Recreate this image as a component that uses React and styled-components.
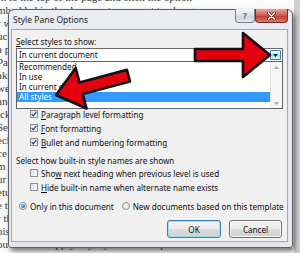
import React from 'react';
import styled, { createGlobalStyle } from 'styled-components';

const GlobalStyle = createGlobalStyle`
  html, body { margin: 0; padding: 0; }
  body { width: 300px; height: 253px; overflow: hidden; background: #ffffff; }
`;

const UI_FONT = `"Noto Sans", "Open Sans", sans-serif`;

// Backdrop: the Word document behind the dialog
const Screen = styled.div`
  position: relative;
  width: 300px;
  height: 253px;
  overflow: hidden;
  background: #cfcfcf;
`;

const Doc = styled.div`
  width: 294px;
  height: 262px;
  overflow: hidden;
  margin-top: -9px;
  padding-left: 0;
  background: #fbfbfb;
  font-family: "Liberation Serif", serif;
  font-size: 11px;
  line-height: 13px;
  color: #3a3a3a;
`;

const DocLine = styled.div`
  white-space: nowrap;
  margin-left: -3px;
`;

// Dialog window
const Dialog = styled.div`
  position: absolute;
  left: 8px;
  top: 9px;
  width: 285px;
  height: 239px;
  box-sizing: border-box;
  display: flex;
  flex-direction: column;
  background: linear-gradient(#e9edf1, #e3e7eb);
  border: 1px solid #5e6266;
  border-radius: 6px 6px 3px 3px;
  box-shadow: 2px 3px 5px rgba(0, 0, 0, 0.55);
  padding: 0 4px 5px 2px;
`;

const TitleBar = styled.div`
  height: 19px;
  display: flex;
  align-items: flex-start;
`;

const Title = styled.div`
  flex: 1;
  padding: 4px 0 0 2px;
  font-family: ${UI_FONT};
  font-size: 8.5px;
  line-height: 11px;
  color: #1e1e1e;
`;

const CaptionButton = styled.div`
  height: 14px;
  width: ${(p) => p.w}px;
  box-sizing: border-box;
  margin-top: -1px;
  display: flex;
  align-items: center;
  justify-content: center;
  border: 1px solid ${(p) => (p.close ? '#7a2a22' : '#7c8188')};
  border-top: none;
  border-radius: 0 0 4px 4px;
  background: ${(p) =>
    p.close
      ? 'linear-gradient(#e8a89e, #d0584a 50%, #c0392b 51%, #d87a68)'
      : 'linear-gradient(#f4f6f8, #dde2e7 50%, #cdd3da 51%, #e3e7eb)'};
  font-family: ${UI_FONT};
  font-size: 9px;
  font-weight: bold;
  color: ${(p) => (p.close ? '#fff' : '#6a6f75')};
`;

const Client = styled.div`
  flex: 1;
  position: relative;
  display: flex;
  flex-direction: column;
  background: #f0f0f0;
  border: 1px solid #a5a9ad;
  padding: 6px 4px 0 4px;
  font-family: ${UI_FONT};
  font-size: 8.1px;
  color: #111;
`;

const Label = styled.div`
  height: 11px;
  line-height: 11px;
  margin-top: ${(p) => p.mt || 0}px;
  white-space: nowrap;
`;

const Key = styled.span`
  text-decoration: underline;
  text-underline-offset: 1px;
`;

const Combo = styled.div`
  position: relative;
  height: 14px;
  margin-top: 1px;
  box-sizing: border-box;
  display: flex;
  align-items: center;
  background: #fff;
  border: 1px solid ${(p) => (p.active ? '#6a6a6a' : '#abadb3')};
  padding-left: 2px;
`;

const ComboText = styled.div`
  flex: 1;
  line-height: 12px;
`;

const DropButton = styled.div`
  width: 11px;
  height: 10px;
  margin-right: 1px;
  box-sizing: border-box;
  display: flex;
  align-items: center;
  justify-content: center;
  border: 1px solid #3c7fb1;
  border-radius: 1px;
  background: linear-gradient(#eaf6fd, #bee6fd 50%, #a7d9f5 51%, #d2ecfb);
`;

const ListBox = styled.div`
  position: absolute;
  left: -1px;
  right: -1px;
  top: 12px;
  height: 48px;
  box-sizing: border-box;
  display: flex;
  background: #fff;
  border: 1px solid #646464;
  z-index: 2;
`;

const Items = styled.div`
  flex: 1;
`;

const Item = styled.div`
  height: 10px;
  line-height: 10px;
  padding-left: 2px;
  background: ${(p) => (p.selected ? '#3399ff' : 'transparent')};
  color: ${(p) => (p.selected ? '#fff' : '#111')};
`;

const ScrollBar = styled.div`
  width: 11px;
  display: flex;
  flex-direction: column;
  justify-content: space-between;
  align-items: center;
  padding: 4px 0 3px;
  background: #f6f6f6;
  border-left: 1px solid #e4e4e4;
`;

const Rows = styled.div`
  display: flex;
  flex-direction: column;
  margin-top: ${(p) => p.mt || 0}px;
  padding-left: ${(p) => p.indent || 0}px;
`;

const CheckRow = styled.div`
  height: 14px;
  display: flex;
  align-items: center;
  gap: 3px;
  white-space: nowrap;
`;

const Box = styled.div`
  width: 8px;
  height: 8px;
  box-sizing: border-box;
  border: 1px solid #8e8f8f;
  background: linear-gradient(135deg, #dcdcdc, #fbfbfb);
  display: flex;
  align-items: center;
  justify-content: center;
`;

const RadioLine = styled.div`
  height: 14px;
  margin-top: 5px;
  padding-left: 3px;
  display: flex;
  align-items: center;
  white-space: nowrap;
`;

const RadioOption = styled.div`
  display: flex;
  align-items: center;
  gap: 3px;
  margin-right: ${(p) => p.mr || 0}px;
`;

const Radio = styled.div`
  width: 8px;
  height: 8px;
  box-sizing: border-box;
  border-radius: 50%;
  border: 1px solid #8e8f8f;
  background: radial-gradient(circle at 40% 40%, #ffffff, #d8d8d8);
  display: flex;
  align-items: center;
  justify-content: center;
`;

const Dot = styled.div`
  width: 4px;
  height: 4px;
  border-radius: 50%;
  background: radial-gradient(circle at 35% 35%, #8fd3f7, #1a6fa8 70%);
`;

const ButtonRow = styled.div`
  display: flex;
  justify-content: flex-end;
  gap: 8px;
  margin-top: 7px;
  padding-right: 1px;
`;

const Button = styled.div`
  width: ${(p) => p.w}px;
  height: 18px;
  box-sizing: border-box;
  display: flex;
  align-items: center;
  justify-content: center;
  border: 1px solid ${(p) => (p.primary ? '#3c7fb1' : '#707070')};
  border-radius: 3px;
  box-shadow: ${(p) => (p.primary ? 'inset 0 0 0 1px #9fdcf8' : 'inset 0 0 0 1px #fbfbfb')};
  background: linear-gradient(#f2f2f2, #ebebeb 50%, #dddddd 51%, #cfcfcf);
  color: #111;
`;

const Overlay = styled.svg`
  position: absolute;
  left: 0;
  top: 0;
  pointer-events: none;
  z-index: 5;
`;

const docLines = [
  'rn to the top of the page and click the option',
  'mbedded in the document you want to change.',
  'r want the Styles pane to show only a few of',
  'uch as the styles in use in this document.',
  'a particular selection of styles can help.',
  'Pane options to change the list that shows.',
  'ake the change in the dropdown menu above.',
  'well as the way the style names are sorted.',
  'and that is the default option in Word 2010.',
  'ick the Options link at the bottom of the pane.',
  'Select the All styles option from the list.',
  'eck the formatting options you want to show.',
  'ce you have made your choices, click OK.',
  'm the new style list will show in the pane.',
  'ur document once you have finished editing.',
  'eturn to the Styles pane whenever you need.',
  'e the changes for new documents as well.',
  'r the current document only, as shown here.',
  'his setting is kept along with the file.',
  'ou can now apply any style from the pane.',
];

const Check = () => (
  <svg width="6" height="6" viewBox="0 0 6 6">
    <path d="M0.6 3.1 L2.3 4.8 L5.4 0.9" fill="none" stroke="#2f4b86" strokeWidth="1.3" />
  </svg>
);

const CheckItem = ({ checked, k, rest }) => (
  <CheckRow>
    <Box>{checked && <Check />}</Box>
    <span>
      <Key>{k}</Key>
      {rest}
    </span>
  </CheckRow>
);

const App = () => (
  <Screen>
    <GlobalStyle />
    <Doc>
      {docLines.map((l, i) => (
        <DocLine key={i}>{l}</DocLine>
      ))}
    </Doc>

    <Dialog>
      <TitleBar>
        <Title>Style Pane Options</Title>
        <CaptionButton w={20}>?</CaptionButton>
        <CaptionButton w={33} close>
          <svg width="9" height="8" viewBox="0 0 9 8">
            <path d="M1.5 1 L7.5 7 M7.5 1 L1.5 7" stroke="#5a1a14" strokeWidth="3" strokeLinecap="round" />
            <path d="M1.5 1 L7.5 7 M7.5 1 L1.5 7" stroke="#fff" strokeWidth="1.6" strokeLinecap="round" />
          </svg>
        </CaptionButton>
      </TitleBar>

      <Client>
        <Label>
          <Key>S</Key>elect styles to show:
        </Label>
        <Combo active>
          <ComboText>In current document</ComboText>
          <DropButton>
            <svg width="5" height="3" viewBox="0 0 5 3">
              <path d="M0 0 L5 0 L2.5 3 Z" fill="#111" />
            </svg>
          </DropButton>
          <ListBox>
            <Items>
              <Item>Recommended</Item>
              <Item>In use</Item>
              <Item>In current document</Item>
              <Item selected>All styles</Item>
            </Items>
            <ScrollBar>
              <svg width="5" height="3" viewBox="0 0 5 3">
                <path d="M0 3 L5 3 L2.5 0 Z" fill="#a8a8a8" />
              </svg>
              <svg width="5" height="3" viewBox="0 0 5 3">
                <path d="M0 0 L5 0 L2.5 3 Z" fill="#a8a8a8" />
              </svg>
            </ScrollBar>
          </ListBox>
        </Combo>

        <Label mt={4}>Select how list is sorted:</Label>
        <Combo>
          <ComboText>As Recommended</ComboText>
        </Combo>
        <Label mt={4}>Select formatting to show as styles:</Label>

        <Rows indent={14}>
          <CheckItem checked k="P" rest="aragraph level formatting" />
          <CheckItem checked k="F" rest="ont formatting" />
          <CheckItem checked k="B" rest="ullet and numbering formatting" />
        </Rows>

        <Label mt={6}>Select how built-in style names are shown</Label>
        <Rows indent={14}>
          <CheckRow>
            <Box />
            <span>
              Sho<Key>w</Key> next heading when previous level is used
            </span>
          </CheckRow>
          <CheckItem k="H" rest="ide built-in name when alternate name exists" />
        </Rows>

        <RadioLine>
          <RadioOption mr={8}>
            <Radio>
              <Dot />
            </Radio>
            Only in this document
          </RadioOption>
          <RadioOption>
            <Radio />
            New documents based on this template
          </RadioOption>
        </RadioLine>

        <ButtonRow>
          <Button w={54} primary>OK</Button>
          <Button w={53}>Cancel</Button>
        </ButtonRow>
      </Client>
    </Dialog>

    {/* red callout arrows drawn over the screenshot */}
    <Overlay width="300" height="253" viewBox="0 0 300 253">
      <path
        d="M195 49 L243 49 L243 33 L270 55 L243 77 L243 61 L195 61 Z"
        fill="#e3000f"
        stroke="#111"
        strokeWidth="2.6"
        strokeLinejoin="round"
      />
      <path
        transform="translate(56 95) rotate(-15)"
        d="M0 0 L26 -21 L26 -6 L75 -6 L75 6 L26 6 L26 21 Z"
        fill="#e3000f"
        stroke="#111"
        strokeWidth="2.6"
        strokeLinejoin="round"
      />
    </Overlay>
  </Screen>
);

export default App;
